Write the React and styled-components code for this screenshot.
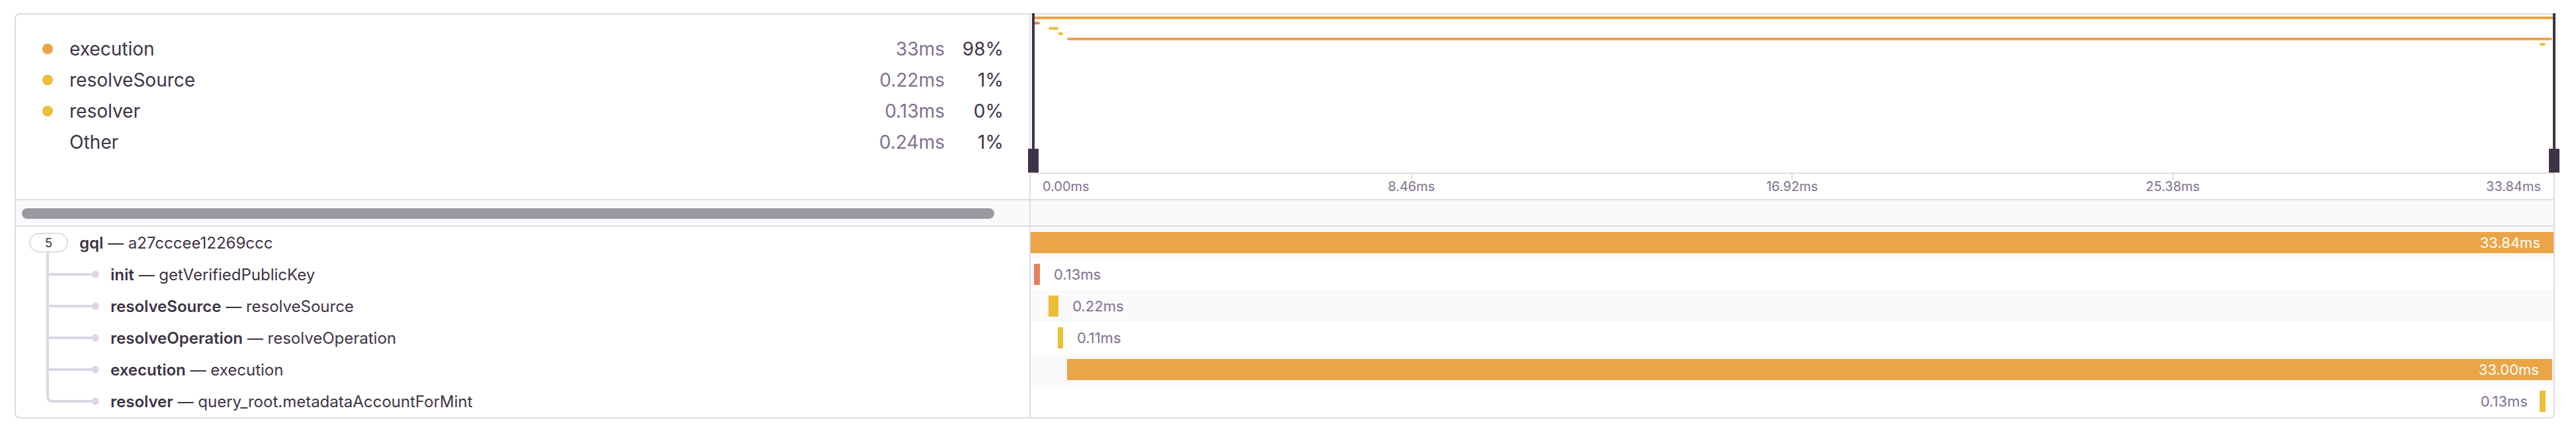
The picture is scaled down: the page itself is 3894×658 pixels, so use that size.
import React from "react";
import styled, { createGlobalStyle } from "styled-components";

const ORANGE = "#EBA446";
const SALMON = "#E9805C";
const YELLOW = "#EBBE36";
const BORDER = "#E0DCE5";
const TEXT = "#3E3446";
const SUBTEXT = "#80708F";
const ROWBG = "#FAF9FB";

const TOTAL = 33.84;
const TRACK = 2302;
const px = (ms) => (ms / TOTAL) * TRACK;

const legend = [
  { name: "execution", color: ORANGE, time: "33ms", pct: "98%" },
  { name: "resolveSource", color: YELLOW, time: "0.22ms", pct: "1%" },
  { name: "resolver", color: YELLOW, time: "0.13ms", pct: "0%" },
  { name: "Other", color: null, time: "0.24ms", pct: "1%" },
];

const spans = [
  { op: "gql", desc: "a27cccee12269ccc", start: 0, dur: 33.84, color: ORANGE, inside: true },
  { op: "init", desc: "getVerifiedPublicKey", start: 0.075, dur: 0.13, color: SALMON },
  { op: "resolveSource", desc: "resolveSource", start: 0.4, dur: 0.22, color: YELLOW },
  { op: "resolveOperation", desc: "resolveOperation", start: 0.61, dur: 0.11, color: YELLOW },
  { op: "execution", desc: "execution", start: 0.81, dur: 33.0, color: ORANGE, inside: true, label: "33.00ms" },
  { op: "resolver", desc: "query_root.metadataAccountForMint", start: 33.53, dur: 0.13, color: YELLOW, before: true },
];

const ticks = ["0.00ms", "8.46ms", "16.92ms", "25.38ms", "33.84ms"];

const GlobalStyle = createGlobalStyle`
  body {
    margin: 0;
    background: #fff;
    font-family: Inter, "Noto Sans", sans-serif;
    color: ${TEXT};
  }
`;

const Page = styled.div`
  padding: 20px 0 0 22px;
`;

const Panel = styled.div`
  width: 3840px;
  box-sizing: border-box;
  border: 2px solid ${BORDER};
  border-radius: 8px;
  background: #fff;
  box-shadow: 0 2px 2px rgba(43, 34, 51, 0.04);
`;

const Split = styled.div`
  display: grid;
  grid-template-columns: 1532px 1fr;
  height: ${(p) => p.h}px;
  border-bottom: ${(p) => (p.last ? "none" : `2px solid ${BORDER}`)};
  background: ${(p) => (p.gray ? ROWBG : "transparent")};
`;

const RightCell = styled.div`
  border-left: 2px solid ${BORDER};
  position: relative;
  display: flex;
  flex-direction: column;
  background: ${(p) => (p.gray ? ROWBG : "transparent")};
`;

const Legend = styled.div`
  padding: 28px 39px 0 40px;
`;

const LegendRow = styled.div`
  display: grid;
  grid-template-columns: 16px 1fr auto 89px;
  align-items: center;
  height: 47px;
  font-size: 28px;
`;

const Dot = styled.span`
  width: 16px;
  height: 16px;
  border-radius: 50%;
  background: ${(p) => p.color || "transparent"};
`;

const LegendName = styled.span`
  margin-left: 25px;
  color: ${TEXT};
`;

const LegendTime = styled.span`
  color: ${SUBTEXT};
  text-align: right;
`;

const LegendPct = styled.span`
  color: ${TEXT};
  text-align: right;
`;

const Minimap = styled.div`
  position: relative;
  height: 239px;
`;

const Handle = styled.div`
  position: absolute;
  top: -2px;
  left: ${(p) => p.x}px;
  width: 4px;
  height: 241px;
  background: ${TEXT};
  &::after {
    content: "";
    position: absolute;
    left: -6px;
    bottom: 0;
    width: 16px;
    height: 36px;
    background: ${TEXT};
  }
`;

const Axis = styled.div`
  position: relative;
  height: 38px;
  border-top: 2px solid ${BORDER};
  font-size: 20px;
  color: ${SUBTEXT};
`;

const Tick = styled.div`
  position: absolute;
  top: 0;
  left: ${(p) => p.x}px;
  height: 100%;
  &::before {
    content: "";
    position: absolute;
    top: 0;
    left: -1px;
    width: 2px;
    height: 8px;
    background: ${(p) => (p.hideLine ? "transparent" : BORDER)};
  }
`;

const TickLabel = styled.span`
  position: absolute;
  top: 9px;
  white-space: nowrap;
  line-height: 20px;
  ${(p) =>
    p.align === "start"
      ? "left: 18px;"
      : p.align === "end"
      ? "right: 19px;"
      : "left: 0; transform: translateX(-50%);"}
`;

const ScrollTrack = styled.div`
  display: flex;
  align-items: flex-start;
  padding: 12px 0 0 9px;
`;

const Thumb = styled.div`
  width: 1470px;
  height: 16px;
  border-radius: 8px;
  background: #9c99a2;
`;

const TreeCell = styled.div`
  display: flex;
  align-items: center;
  font-size: 24px;
  white-space: nowrap;
  color: ${TEXT};
`;

const Toggle = styled.div`
  position: relative;
  margin: 0 17px 0 20px;
  width: 59px;
  height: 30px;
  box-sizing: border-box;
  border: 2px solid ${BORDER};
  border-radius: 15px;
  display: flex;
  align-items: center;
  justify-content: center;
  font-size: 19px;
  color: ${TEXT};
  &::after {
    content: "";
    position: absolute;
    left: 24px;
    top: 28px;
    width: 4px;
    height: 11px;
    background: #dcd7e1;
  }
`;

const Op = styled.b`
  font-weight: 600;
`;

const Desc = styled.span`
  font-weight: 400;
`;

const Bar = styled.div`
  position: absolute;
  top: 8px;
  height: 32px;
  background: ${(p) => p.color};
  display: flex;
  align-items: center;
  justify-content: flex-end;
  padding-right: ${(p) => (p.inside ? 20 : 0)}px;
  box-sizing: border-box;
  color: #fff;
  font-size: 22px;
`;

const BarLabel = styled.span`
  position: absolute;
  top: 0;
  height: 48px;
  display: flex;
  align-items: center;
  font-size: 22px;
  color: ${SUBTEXT};
  white-space: nowrap;
`;

const Connector = ({ last }) => (
  <svg width="143" height="48" viewBox="0 0 143 48" style={{ flex: "none" }}>
    {last ? (
      <path d="M48 0 V16 Q48 24 56 24 H116" fill="none" stroke="#DCD7E1" strokeWidth="4" />
    ) : (
      <g stroke="#DCD7E1" strokeWidth="4">
        <line x1="48" y1="0" x2="48" y2="48" />
        <line x1="48" y1="24" x2="116" y2="24" />
      </g>
    )}
    <circle cx="120" cy="24" r="5.5" fill="#DCD7E1" />
  </svg>
);

const MinimapBars = () => (
  <svg width={TRACK} height="239" style={{ display: "block" }}>
    {spans.map((s, i) => (
      <rect
        key={s.op}
        x={px(s.start) + (i === 0 ? 4 : 0)}
        y={3 + i * 8}
        width={Math.max(px(s.dur) - (i === 0 ? 4 : 0), 5)}
        height="4"
        rx="2"
        fill={s.color}
      />
    ))}
  </svg>
);

const SpanBar = ({ s }) => {
  const left = px(s.start);
  const width = Math.max(px(s.dur), 6);
  if (s.inside) {
    return (
      <Bar color={s.color} inside style={{ left, width }}>
        {s.label || `${s.dur.toFixed(2)}ms`}
      </Bar>
    );
  }
  const text = `${s.dur.toFixed(2)}ms`;
  return (
    <>
      <Bar color={s.color} style={{ left, width }} />
      {s.before ? (
        <BarLabel style={{ right: TRACK - left + 18 }}>{text}</BarLabel>
      ) : (
        <BarLabel style={{ left: left + width + 21 }}>{text}</BarLabel>
      )}
    </>
  );
};

export default function App() {
  return (
    <>
      <GlobalStyle />
      <Page>
        <Panel>
          <Split h={279}>
            <Legend>
              {legend.map((l) => (
                <LegendRow key={l.name}>
                  <Dot color={l.color} />
                  <LegendName>{l.name}</LegendName>
                  <LegendTime>{l.time}</LegendTime>
                  <LegendPct>{l.pct}</LegendPct>
                </LegendRow>
              ))}
            </Legend>
            <RightCell>
              <Minimap>
                <MinimapBars />
                <Handle x={2} />
                <Handle x={2301} />
              </Minimap>
              <Axis>
                {ticks.map((t, i) => (
                  <Tick key={t} x={(i * TRACK) / 4} hideLine={i === 0 || i === 4}>
                    <TickLabel align={i === 0 ? "start" : i === 4 ? "end" : "center"}>{t}</TickLabel>
                  </Tick>
                ))}
              </Axis>
            </RightCell>
          </Split>
          <Split h={38} gray>
            <ScrollTrack>
              <Thumb />
            </ScrollTrack>
            <RightCell />
          </Split>
          {spans.map((s, i) => (
            <Split key={s.op} h={48} last={i === spans.length - 1} style={{ borderBottom: "none" }}>
              <TreeCell>
                {i === 0 ? <Toggle>5</Toggle> : <Connector last={i === spans.length - 1} />}
                <Op>{s.op}</Op>
                <Desc>&nbsp;—&nbsp;{s.desc}</Desc>
              </TreeCell>
              <RightCell gray={i % 2 === 0}>
                <SpanBar s={s} />
              </RightCell>
            </Split>
          ))}
        </Panel>
      </Page>
    </>
  );
}
